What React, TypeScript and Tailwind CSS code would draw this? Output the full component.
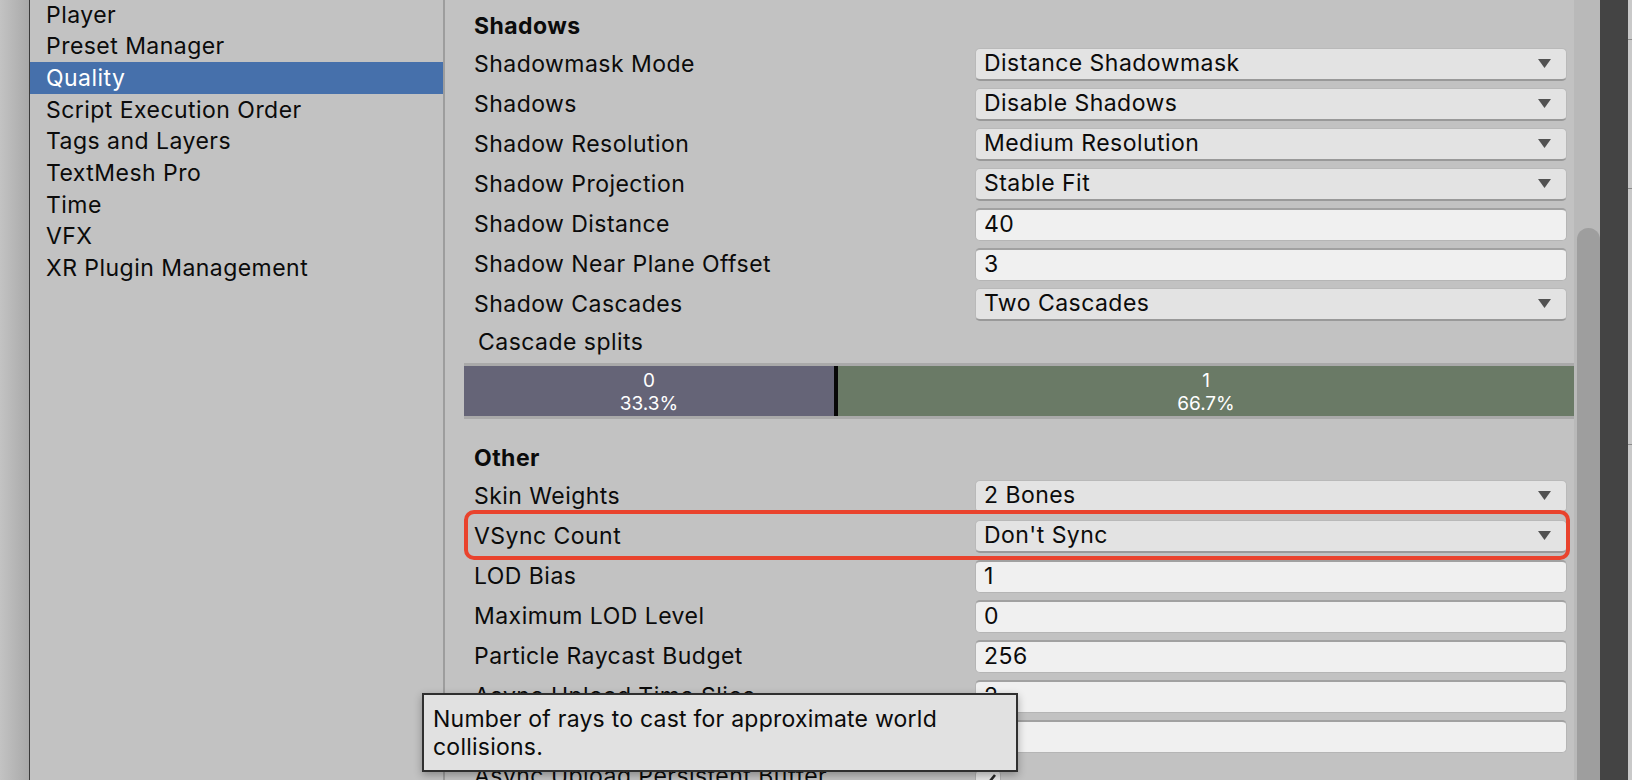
import React from 'react';

const sidebarItems = [
  'Player',
  'Preset Manager',
  'Quality',
  'Script Execution Order',
  'Tags and Layers',
  'TextMesh Pro',
  'Time',
  'VFX',
  'XR Plugin Management',
];

type Row = { label: string; kind: 'dropdown' | 'field' | 'check'; value?: string };

const shadowRows: Row[] = [
  { label: 'Shadowmask Mode', kind: 'dropdown', value: 'Distance Shadowmask' },
  { label: 'Shadows', kind: 'dropdown', value: 'Disable Shadows' },
  { label: 'Shadow Resolution', kind: 'dropdown', value: 'Medium Resolution' },
  { label: 'Shadow Projection', kind: 'dropdown', value: 'Stable Fit' },
  { label: 'Shadow Distance', kind: 'field', value: '40' },
  { label: 'Shadow Near Plane Offset', kind: 'field', value: '3' },
  { label: 'Shadow Cascades', kind: 'dropdown', value: 'Two Cascades' },
];

const otherRows: Row[] = [
  { label: 'Skin Weights', kind: 'dropdown', value: '2 Bones' },
  { label: 'VSync Count', kind: 'dropdown', value: "Don't Sync" },
  { label: 'LOD Bias', kind: 'field', value: '1' },
  { label: 'Maximum LOD Level', kind: 'field', value: '0' },
  { label: 'Particle Raycast Budget', kind: 'field', value: '256' },
  { label: 'Async Upload Time Slice', kind: 'field', value: '2' },
  { label: 'Async Upload Buffer Size', kind: 'field', value: '16' },
  { label: 'Async Upload Persistent Buffer', kind: 'check' },
];

function Arrow() {
  return (
    <svg width="13" height="9" viewBox="0 0 13 9" className="shrink-0">
      <polygon points="0,0 13,0 6.5,9" fill="#525252" />
    </svg>
  );
}

function Control({ row }: { row: Row }) {
  if (row.kind === 'dropdown') {
    return (
      <div className="h-[33px] flex items-center justify-between pl-[8px] pr-[15px] rounded-[5px] bg-[#e3e3e3] border border-[#b9b9b9] border-b-2 border-b-[#999999]">
        <span className="truncate">{row.value}</span>
        <Arrow />
      </div>
    );
  }
  if (row.kind === 'field') {
    return (
      <div className="h-[33px] flex items-center pl-[8px] rounded-[5px] bg-[#f0f0f0] border border-[#b5b5b5] border-t-2 border-t-[#a1a1a1]">
        <span>{row.value}</span>
      </div>
    );
  }
  return (
    <div className="h-[33px] flex items-center">
      <div className="w-[26px] h-[26px] mt-[14px] rounded-[4px] bg-[#e6e6e6] border border-[#b0b0b0] flex items-start justify-center pt-[2px]">
        <svg width="18" height="16" viewBox="0 0 18 16">
          <polyline points="2,8 7,13 16,2" fill="none" stroke="#262626" strokeWidth="2.6" />
        </svg>
      </div>
    </div>
  );
}

function PropRow({ row, highlight }: { row: Row; highlight?: boolean }) {
  return (
    <div className="relative h-[40px] grid grid-cols-[501px_1fr] items-center">
      <span className="whitespace-nowrap">{row.label}</span>
      <Control row={row} />
      {highlight && (
        <div className="absolute -left-[10px] -right-[3px] -top-[6px] -bottom-[4px] rounded-[10px] border-[4px] border-[#e9432d] pointer-events-none" />
      )}
    </div>
  );
}

export default function App() {
  return (
    <div className="relative w-[1632px] h-[780px] flex overflow-hidden bg-[#c2c2c2] text-[#0b0b0b] text-[23px] tracking-[0.02em] font-['Inter','Noto_Sans',sans-serif]">
      {/* window edge */}
      <div className="w-[30px] shrink-0 bg-gradient-to-r from-[#c3c3c3] to-[#a9a9a9] border-r border-[#3a3a3a]" />

      {/* settings list */}
      <aside className="w-[415px] shrink-0 -mt-[1px] border-r-2 border-[#9d9d9d]">
        {sidebarItems.map((item) => (
          <div
            key={item}
            className={`h-[31.7px] flex items-center pl-[16px] whitespace-nowrap ${
              item === 'Quality' ? 'bg-[#4670ab] text-white' : ''
            }`}
          >
            {item}
          </div>
        ))}
      </aside>

      {/* inspector */}
      <main className="flex-1 min-w-0 pl-[29px] pr-[7px] pt-[9px]">
        <div className="h-[35px] flex items-center font-bold">Shadows</div>
        {shadowRows.map((row) => (
          <PropRow key={row.label} row={row} />
        ))}
        <div className="h-[36px] flex items-center pl-[4px]">Cascade splits</div>
        <div className="-ml-[10px] -mr-[7px] mt-[3px] border-y-[3px] border-[#a9a9a9] h-[56px] flex text-white text-[19px] tracking-normal leading-[23px]">
          <div className="w-[370px] bg-[#656477] flex flex-col items-center justify-center pt-[2px]">
            <span>0</span>
            <span>33.3%</span>
          </div>
          <div className="w-[4px] bg-[#080808]" />
          <div className="flex-1 bg-[#6a7a66] flex flex-col items-center justify-center pt-[2px]">
            <span>1</span>
            <span>66.7%</span>
          </div>
        </div>
        <div className="h-[36px] mt-[21px] flex items-center font-bold">Other</div>
        {otherRows.map((row) => (
          <PropRow key={row.label} row={row} highlight={row.label === 'VSync Count'} />
        ))}
      </main>

      {/* scrollbar */}
      <div className="w-[26px] shrink-0 bg-[#b9b9b9] flex justify-center pt-[228px] pl-[3px]">
        <div className="w-[20px] flex-1 rounded-t-full bg-[#9e9e9e]" />
      </div>

      {/* neighbouring window */}
      <div className="w-[28px] shrink-0 bg-[#444444]" />
      <div className="w-[4px] shrink-0 bg-[#c9c9c9] flex flex-col">
        <div className="h-[40px] border-b border-[#8a8a8a]" />
        <div className="h-[149px] border-b border-[#8a8a8a]" />
        <div className="h-[256px] border-b border-[#8a8a8a]" />
      </div>

      {/* tooltip */}
      <div className="absolute left-[422px] top-[693px] w-[596px] h-[79px] bg-[#e1e1e1] border-2 border-[#2f2f2f] shadow-[0_3px_8px_rgba(0,0,0,0.3)] pl-[9px] pt-[10px] leading-[28px] tracking-[0.01em] z-10">
        <div>Number of rays to cast for approximate world</div>
        <div>collisions.</div>
      </div>
    </div>
  );
}
